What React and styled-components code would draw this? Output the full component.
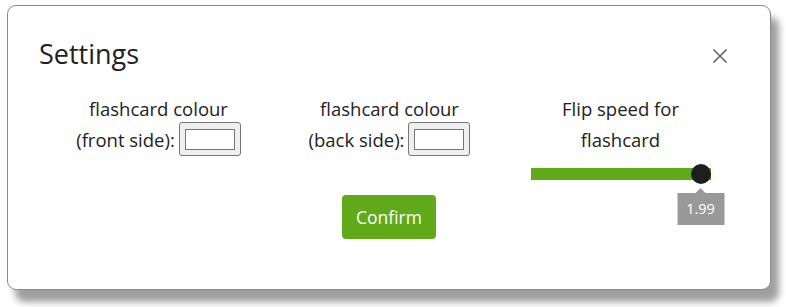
import React from "react";
import styled, { createGlobalStyle } from "styled-components";

const Global = createGlobalStyle`
  html, body { margin: 0; padding: 0; background: #fff; }
  body { font-family: "Open Sans", "Noto Sans", sans-serif; color: #222; }
`;

const Page = styled.div`
  padding: 5px 16px 18px 7px;
`;

const Dialog = styled.div`
  box-sizing: border-box;
  width: 764px;
  height: 285px;
  border: 1px solid #8a8a8a;
  border-radius: 9px;
  background: #fff;
  box-shadow: 8px 12px 7px rgba(0, 0, 0, 0.38);
  display: flex;
  flex-direction: column;
`;

const Header = styled.div`
  display: flex;
  justify-content: space-between;
  align-items: center;
  padding: 27px 42px 0 31px;
  height: 40px;
`;

const Title = styled.h2`
  margin: 0;
  font-size: 27px;
  font-weight: 400;
  color: #222;
`;

const Close = styled.button`
  border: none;
  background: none;
  padding: 0;
  width: 16px;
  height: 16px;
  display: flex;
  cursor: pointer;
  position: relative;
  top: 3px;
`;

const Grid = styled.div`
  display: grid;
  grid-template-columns: repeat(3, 231px);
  padding: 20px 0 0 35px;
`;

const Column = styled.div`
  text-align: center;
  font-size: 18.5px;
  line-height: 31px;
  color: #222;
`;

const ColourBox = styled.span`
  display: inline-flex;
  align-items: center;
  justify-content: center;
  box-sizing: border-box;
  width: 62px;
  height: 34px;
  margin-left: 4px;
  vertical-align: middle;
  background: #efefef;
  border: 1px solid #767676;
  border-radius: 3px;
  position: relative;
  top: -3px;
`;

const Swatch = styled.span`
  box-sizing: border-box;
  width: 50px;
  height: 21px;
  background: #fff;
  border: 1px solid #767676;
`;

const SliderWrap = styled.div`
  position: relative;
  width: 180px;
  height: 12px;
  margin: 13px auto 0;
`;

const Track = styled.div`
  height: 12px;
  background: #60aa19;
`;

const Thumb = styled.div`
  position: absolute;
  top: -4px;
  width: 20px;
  height: 20px;
  margin-left: -10px;
  border-radius: 50%;
  background: #1e1e1e;
`;

const Tip = styled.div`
  position: absolute;
  top: 25px;
  transform: translateX(-50%);
  width: 47px;
  height: 32px;
  background: #999;
  color: #fff;
  font-size: 14.5px;
  line-height: 32px;
  text-align: center;
  &::before {
    content: "";
    position: absolute;
    top: -5px;
    left: 50%;
    margin-left: -5px;
    border-left: 5px solid transparent;
    border-right: 5px solid transparent;
    border-bottom: 5px solid #999;
  }
`;

const Footer = styled.div`
  display: flex;
  justify-content: center;
  padding-top: 15px;
`;

const Button = styled.button`
  width: 94px;
  height: 44px;
  border: none;
  border-radius: 4px;
  background: #60aa19;
  color: #fff;
  font-family: inherit;
  font-size: 17.5px;
`;

export default function App() {
  const value = 1.99;
  const pos = 170;
  return (
    <>
      <Global />
      <Page>
        <Dialog>
          <Header>
            <Title>Settings</Title>
            <Close aria-label="close">
              <svg width="16" height="16" viewBox="0 0 16 16">
                <path d="M1.5 1.5 L14.5 14.5 M14.5 1.5 L1.5 14.5" stroke="#666" strokeWidth="1.6" fill="none" />
              </svg>
            </Close>
          </Header>
          <Grid>
            <Column>
              flashcard colour
              <br />
              (front side):
              <ColourBox><Swatch /></ColourBox>
            </Column>
            <Column>
              flashcard colour
              <br />
              (back side):
              <ColourBox><Swatch /></ColourBox>
            </Column>
            <Column>
              Flip speed for
              <br />
              flashcard
              <SliderWrap>
                <Track />
                <Thumb style={{ left: pos }} />
                <Tip style={{ left: pos }}>{value}</Tip>
              </SliderWrap>
            </Column>
          </Grid>
          <Footer>
            <Button>Confirm</Button>
          </Footer>
        </Dialog>
      </Page>
    </>
  );
}
